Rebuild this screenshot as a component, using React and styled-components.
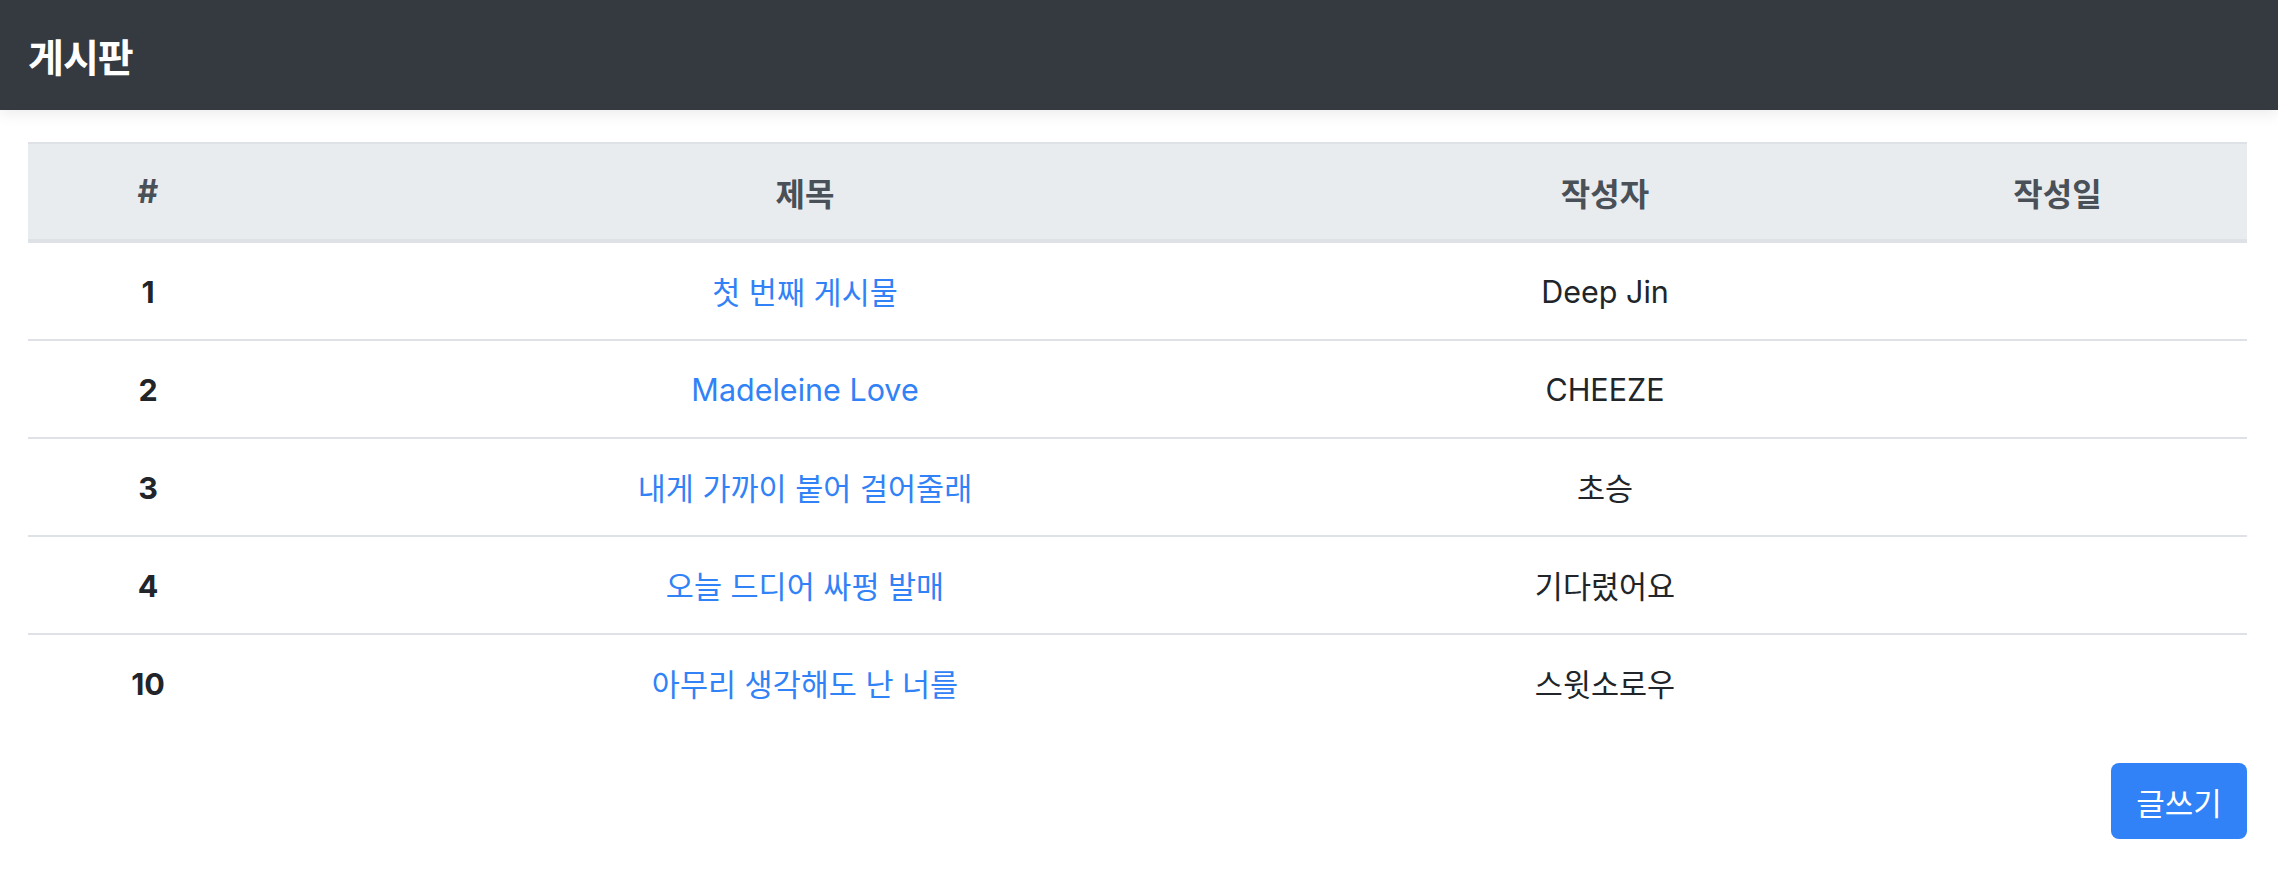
import React from 'react'
import styled, {createGlobalStyle} from 'styled-components';

const GlobalStyle = createGlobalStyle`
  body {
    margin: 0;
    background: #FFFFFF;
    color: #212529;
    font-family: Inter, "Noto Sans CJK KR", "Noto Sans", sans-serif;
  }
`;

const Navbar = styled.header`
  height: 110px;
  background-color: #343a40;
  display: flex;
  align-items: center;
  padding: 0 28px;
  box-sizing: border-box;
  box-shadow: 0px 4px 14px 0px rgba(0,0,0,0.08);
  position: relative;
  z-index: 2;
`;

const Brand = styled.h1`
  margin: 0;
  color: #FFFFFF;
  font-size: 39px;
  font-weight: 700;
  letter-spacing: -1px;
`;

const Container = styled.main`
  padding: 32px 31px 0 28px;
`;

const Table = styled.table`
  width: 100%;
  table-layout: fixed;
  border-collapse: collapse;
  margin-bottom: 32px;
  font-size: 32px;
`;

const HeadCell = styled.th`
  box-sizing: border-box;
  width: ${props => props.w || 'auto'};
  background-color: #e9ecef;
  color: #495057;
  font-weight: 700;
  text-align: center;
  height: 98px;
  padding: 0 24px;
  border-top: 2px solid #dee2e6;
  border-bottom: 4px solid #dee2e6;
`;

const Row = styled.tr`
  & + & td {
    border-top: 2px solid #dee2e6;
  }
`;

const Cell = styled.td`
  box-sizing: content-box;
  text-align: center;
  height: 96px;
  padding: 0 24px;
  font-size: 30.5px;
  font-weight: ${props => props.bold ? 700 : 400};
  color: #212529;
`;

const TitleLink = styled.a`
  color: #3182f6;
  text-decoration: none;
`;

const Actions = styled.div`
  display: flex;
  justify-content: flex-end;
`;

const WriteButton = styled.button`
  width: 136px;
  height: 76px;
  border: none;
  border-radius: 8px;
  background-color: #3182f6;
  color: #FFFFFF;
  font-family: inherit;
  font-size: 31px;
  cursor: pointer;
`;

const posts = [
    {id: 1, title: '첫 번째 게시물', author: 'Deep Jin', date: ''},
    {id: 2, title: 'Madeleine Love', author: 'CHEEZE', date: ''},
    {id: 3, title: '내게 가까이 붙어 걸어줄래', author: '초승', date: ''},
    {id: 4, title: '오늘 드디어 싸펑 발매', author: '기다렸어요', date: ''},
    {id: 10, title: '아무리 생각해도 난 너를', author: '스윗소로우', date: ''},
];

const App = () => (
    <>
        <GlobalStyle/>
        <Navbar>
            <Brand>게시판</Brand>
        </Navbar>
        <Container>
            <Table>
                <thead>
                <tr>
                    <HeadCell w='240px'>#</HeadCell>
                    <HeadCell w='1074px'>제목</HeadCell>
                    <HeadCell w='526px'>작성자</HeadCell>
                    <HeadCell>작성일</HeadCell>
                </tr>
                </thead>
                <tbody>
                {posts.map(post => (
                    <Row key={post.id}>
                        <Cell bold>{post.id}</Cell>
                        <Cell><TitleLink href='#'>{post.title}</TitleLink></Cell>
                        <Cell>{post.author}</Cell>
                        <Cell>{post.date}</Cell>
                    </Row>
                ))}
                </tbody>
            </Table>
            <Actions>
                <WriteButton>글쓰기</WriteButton>
            </Actions>
        </Container>
    </>
);

export default App
